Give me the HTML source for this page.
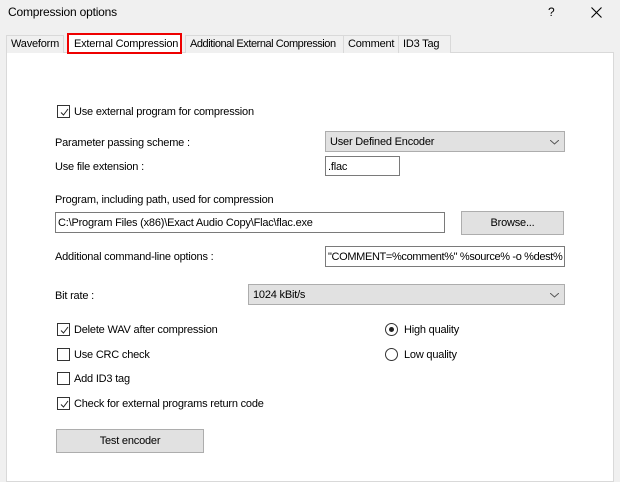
<!DOCTYPE html>
<html><head><meta charset="utf-8"><style>
*{margin:0;padding:0;box-sizing:border-box}
body{width:620px;height:470px;background:#f0f0f0;font-family:"Liberation Sans",sans-serif;font-size:11px;color:#000;position:relative;overflow:hidden;letter-spacing:-0.2px}
.a{position:absolute;white-space:nowrap}
.t{position:absolute;white-space:nowrap;line-height:14px}
.tab{position:absolute;top:35px;height:18px;border:1px solid #d9d9d9;border-bottom:none;background:#f0f0f0;line-height:17px;padding-left:4px;white-space:nowrap;overflow:hidden}
.panel{position:absolute;left:6px;top:52px;width:608px;height:430px;background:#fff;border:1px solid #d9d9d9}
.cb{position:absolute;width:13px;height:13px;border:1px solid #333;background:#fff}
.cb svg{position:absolute;left:1px;top:1px}
.rb{position:absolute;width:13px;height:13px;border:1px solid #333;border-radius:50%;background:#fff}
.combo{position:absolute;background:#e1e1e1;border:1px solid #adadad;line-height:20px;padding-left:4px;white-space:nowrap}
.combo svg{position:absolute;right:5px;top:8px}
.in{position:absolute;background:#fff;border:1px solid #7a7a7a;line-height:20px;padding-left:2px;overflow:hidden;white-space:nowrap}
.btn{position:absolute;background:#e1e1e1;border:1px solid #adadad;text-align:center;white-space:nowrap}
</style></head><body>
<div class="a" style="left:8px;top:5px;font-size:12px">Compression options</div>
<div class="a" style="left:548px;top:5px;font-size:12px">?</div>
<svg class="a" style="left:591px;top:7px" width="11" height="11"><path d="M0.5 0.5L10.5 10.5M10.5 0.5L0.5 10.5" stroke="#000" stroke-width="1.1"/></svg>

<div class="panel"></div>
<div class="tab" style="left:6px;width:58px">Waveform</div>
<div class="tab" style="left:185px;width:159px;letter-spacing:-0.45px">Additional External Compression</div>
<div class="tab" style="left:343px;width:56px">Comment</div>
<div class="tab" style="left:398px;width:53px">ID3 Tag</div>
<div style="position:absolute;left:67px;top:33px;width:115px;height:21px;border:2px solid #e00;background:#fff"></div>
<div class="a" style="left:74px;top:37px;line-height:14px">External Compression</div>

<div class="cb" style="left:57px;top:105px"><svg width="11" height="11"><path d="M2 5.5L4.5 8L9 2" stroke="#222" fill="none"/></svg></div>
<div class="t" style="left:74px;top:105px">Use external program for compression</div>

<div class="t" style="left:55px;top:136px">Parameter passing scheme :</div>
<div class="combo" style="left:325px;top:131px;width:240px;height:21px">User Defined Encoder<svg width="9" height="5"><path d="M0 0L4.5 4L9 0" stroke="#555" fill="none"/></svg></div>
<div class="t" style="left:55px;top:160px">Use file extension :</div>
<div class="in" style="left:325px;top:156px;width:75px;height:20px">.flac</div>

<div class="t" style="left:55px;top:193px">Program, including path, used for compression</div>
<div class="in" style="left:55px;top:212px;width:390px;height:21px">C:\Program Files (x86)\Exact Audio Copy\Flac\flac.exe</div>
<div class="btn" style="left:461px;top:211px;width:103px;height:24px;line-height:23px">Browse...</div>

<div class="t" style="left:55px;top:250px">Additional command-line options :</div>
<div class="in" style="left:325px;top:246px;width:240px;height:21px;letter-spacing:-0.35px">"COMMENT=%comment%" %source% -o %dest%</div>

<div class="t" style="left:55px;top:289px">Bit rate :</div>
<div class="combo" style="left:248px;top:284px;width:317px;height:21px">1024 kBit/s<svg width="9" height="5"><path d="M0 0L4.5 4L9 0" stroke="#555" fill="none"/></svg></div>

<div class="cb" style="left:57px;top:323px"><svg width="11" height="11"><path d="M2 5.5L4.5 8L9 2" stroke="#222" fill="none"/></svg></div>
<div class="t" style="left:74px;top:323px">Delete WAV after compression</div>
<div class="cb" style="left:57px;top:348px"></div>
<div class="t" style="left:74px;top:348px">Use CRC check</div>
<div class="cb" style="left:57px;top:372px"></div>
<div class="t" style="left:74px;top:372px">Add ID3 tag</div>
<div class="cb" style="left:57px;top:397px"><svg width="11" height="11"><path d="M2 5.5L4.5 8L9 2" stroke="#222" fill="none"/></svg></div>
<div class="t" style="left:74px;top:397px">Check for external programs return code</div>

<div class="rb" style="left:385px;top:323px"><div style="position:absolute;left:3px;top:3px;width:5px;height:5px;border-radius:50%;background:#222"></div></div>
<div class="t" style="left:404px;top:323px">High quality</div>
<div class="rb" style="left:385px;top:348px"></div>
<div class="t" style="left:404px;top:348px">Low quality</div>

<div class="btn" style="left:56px;top:429px;width:148px;height:24px;line-height:23px">Test encoder</div>
</body></html>
